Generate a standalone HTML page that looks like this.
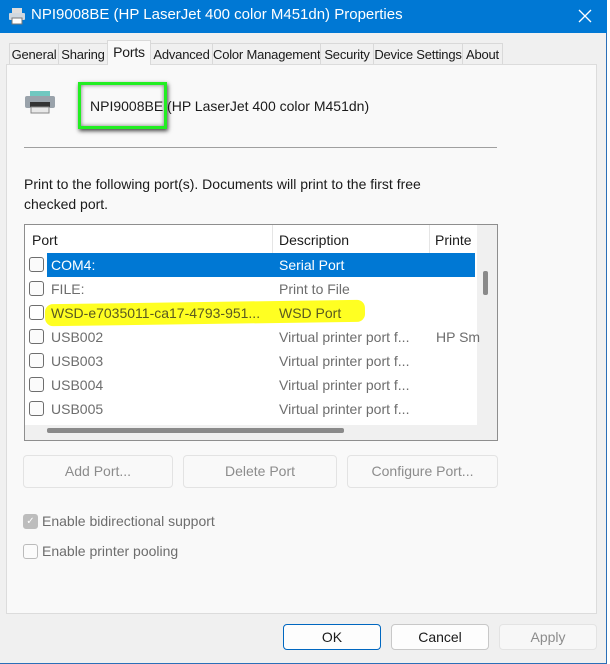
<!DOCTYPE html>
<html><head><style>
*{box-sizing:border-box;margin:0;padding:0}
body{width:610px;height:664px;overflow:hidden;background:#fff;font-family:"Liberation Sans",sans-serif;font-size:14px;color:#1a1a1a;position:relative}
.win{position:absolute;left:0;top:0;width:607px;height:664px;background:#f0f0f0;border-right:1px solid #2a6fb8;border-bottom:1px solid #2a6fb8}
.title{position:absolute;left:0;top:0;width:607px;height:33px;background:#0078d4;color:#fff;font-size:15px}
.a{position:absolute;white-space:nowrap}
.tab{position:absolute;top:43px;height:22px;border:1px solid #d9d9d9;border-bottom:none;background:#f0f0f0;font-size:13px;letter-spacing:-0.2px;padding:3px 0 0 0;text-align:center;white-space:nowrap;overflow:hidden}
.panel{position:absolute;left:6px;top:64px;width:591px;height:550px;background:#f9f9f9;border:1px solid #dcdcdc}
.cb{position:absolute;width:15px;height:15px;border:1px solid #6e6e6e;border-radius:3px;background:#fbfbfb}
.btn{position:absolute;height:33px;border:1px solid #e3e3e3;border-radius:4px;background:#f9f9f9;color:#8c8c8c;text-align:center;line-height:31px}
</style></head><body>
<div class="win">
<div class="title">
 <svg class="a" style="left:8px;top:7px" width="18" height="18" viewBox="0 0 18 18"><rect x="4" y="1" width="10" height="5" fill="#ddd"/><rect x="1" y="6" width="16" height="7" rx="1" fill="#cfd8e0"/><rect x="4" y="11" width="10" height="6" fill="#fff" stroke="#777"/></svg>
 <div class="a" style="left:31px;top:6px">NPI9008BE (HP LaserJet 400 color M451dn) Properties</div>
 <svg class="a" style="left:577px;top:8px" width="16" height="16"><path d="M2 2L14 14M14 2L2 14" stroke="#fff" stroke-width="1.3"/></svg>
</div>
<div class="tab" style="left:9px;width:50px">General</div>
<div class="tab" style="left:58px;width:50px">Sharing</div>
<div class="tab" style="left:107px;width:44px;top:40px;height:25px;background:#f9f9f9;z-index:2;font-size:14px">Ports</div>
<div class="tab" style="left:150px;width:63px">Advanced</div>
<div class="tab" style="left:212px;width:109px">Color Management</div>
<div class="tab" style="left:320px;width:54px">Security</div>
<div class="tab" style="left:373px;width:90px">Device Settings</div>
<div class="tab" style="left:462px;width:41px">About</div>
<div class="panel"></div>
<svg class="a" style="left:24px;top:90px" width="32" height="26" viewBox="0 0 32 26"><rect x="6" y="1" width="20" height="6" fill="#70c8c0"/><rect x="1" y="6" width="30" height="12" rx="2" fill="#9aa3ab"/><rect x="6" y="12" width="20" height="5" fill="#333"/><rect x="7" y="17" width="18" height="6" fill="#e8e8e8" stroke="#888"/></svg>
<div class="a" style="left:78px;top:82px;width:89px;height:47px;border:3px solid #22ee22;box-shadow:1px 2px 4px #444, inset 0 0 4px #777"></div>
<div class="a" style="left:90px;top:98px;font-size:14px">NPI9008BE (HP LaserJet 400 color M451dn)</div>
<div class="a" style="left:24px;top:147px;width:473px;height:1px;background:#a0a0a0"></div>
<div class="a" style="left:24px;top:174px;line-height:20px">Print to the following port(s). Documents will print to the first free<br>checked port.</div>
<div class="a" style="left:24px;top:224px;width:474px;height:217px;border:1px solid #8e8e8e;background:#f0f0f0;overflow:hidden">
 <div class="a" style="left:0;top:0;width:452px;height:200px;background:#fff"></div>
 <div class="a" style="left:7px;top:7px">Port</div>
 <div class="a" style="left:247px;top:0;width:1px;height:28px;background:#e5e5e5"></div>
 <div class="a" style="left:254px;top:7px">Description</div>
 <div class="a" style="left:404px;top:0;width:1px;height:28px;background:#e5e5e5"></div>
 <div class="a" style="left:410px;top:7px">Printe</div>
 <div class="a" style="left:452px;top:0;width:22px;height:200px;background:#f0f0f0"></div>
 <div class="a" style="left:458px;top:46px;width:5px;height:24px;background:#8a8a8a;border-radius:2px"></div>
 <div class="a" style="left:22px;top:28px;width:428px;height:24px;background:#0078d4"></div>
 <div class="a" style="left:20px;top:77px;width:320px;height:22px;background:#ffff22;border-radius:8px;transform:rotate(-0.8deg)"></div>
 <div class="cb" style="left:4px;top:32px"></div><div class="a" style="left:26px;top:32px;color:#fff">COM4:</div><div class="a" style="left:254px;top:32px;color:#fff">Serial Port</div>
 <div class="cb" style="left:4px;top:56px"></div><div class="a" style="left:26px;top:56px;color:#6d6d6d">FILE:</div><div class="a" style="left:254px;top:56px;color:#6d6d6d">Print to File</div>
 <div class="cb" style="left:4px;top:80px;background:transparent"></div><div class="a" style="left:26px;top:80px;color:#5a5a20">WSD-e7035011-ca17-4793-951...</div><div class="a" style="left:254px;top:80px;color:#5a5a20">WSD Port</div>
 <div class="cb" style="left:4px;top:104px"></div><div class="a" style="left:26px;top:104px;color:#6d6d6d">USB002</div><div class="a" style="left:254px;top:104px;color:#6d6d6d">Virtual printer port f...</div><div class="a" style="left:411px;top:104px;color:#6d6d6d">HP Sm</div>
 <div class="cb" style="left:4px;top:128px"></div><div class="a" style="left:26px;top:128px;color:#6d6d6d">USB003</div><div class="a" style="left:254px;top:128px;color:#6d6d6d">Virtual printer port f...</div>
 <div class="cb" style="left:4px;top:152px"></div><div class="a" style="left:26px;top:152px;color:#6d6d6d">USB004</div><div class="a" style="left:254px;top:152px;color:#6d6d6d">Virtual printer port f...</div>
 <div class="cb" style="left:4px;top:176px"></div><div class="a" style="left:26px;top:176px;color:#6d6d6d">USB005</div><div class="a" style="left:254px;top:176px;color:#6d6d6d">Virtual printer port f...</div>
 <div class="a" style="left:22px;top:203px;width:297px;height:5px;background:#8a8a8a;border-radius:2px"></div>
</div>
<div class="btn" style="left:23px;top:455px;width:150px">Add Port...</div>
<div class="btn" style="left:183px;top:455px;width:154px">Delete Port</div>
<div class="btn" style="left:347px;top:455px;width:151px">Configure Port...</div>
<div class="cb" style="left:23px;top:514px;background:#bdbdbd;border-color:#bdbdbd;color:#fff;font-size:10px;line-height:13px;text-align:center">✓</div>
<div class="a" style="left:42px;top:513px;color:#6d6d6d">Enable bidirectional support</div>
<div class="cb" style="left:23px;top:544px;border-color:#bbb"></div>
<div class="a" style="left:42px;top:543px;color:#6d6d6d">Enable printer pooling</div>
<div class="btn" style="left:283px;top:624px;width:98px;height:26px;line-height:24px;background:#fdfdfd;border-color:#0067c0;color:#1a1a1a">OK</div>
<div class="btn" style="left:391px;top:624px;width:98px;height:26px;line-height:24px;background:#fdfdfd;border-color:#c8c8c8;color:#1a1a1a">Cancel</div>
<div class="btn" style="left:499px;top:624px;width:98px;height:26px;line-height:24px;background:#f7f7f7;color:#8c8c8c">Apply</div>
</div>
</body></html>
